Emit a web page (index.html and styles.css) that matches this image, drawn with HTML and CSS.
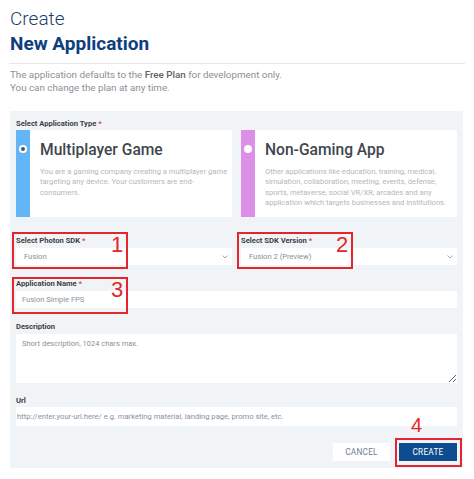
FILE: index.html
```html
<!DOCTYPE html>
<html lang="en">
<head>
<meta charset="utf-8">
<title>Create New Application</title>
<link rel="stylesheet" href="styles.css">
</head>
<body>
<div class="page">
  <header class="head">
    <div class="t1">Create</div>
    <div class="t2">New Application</div>
  </header>
  <hr class="rule">
  <p class="intro">The application defaults to the <b>Free Plan</b> for development only.<br>You can change the plan at any time.</p>

  <form class="panel">
    <div class="lbl">Select Application Type <span class="req">*</span></div>
    <div class="cards">
      <div class="card">
        <div class="strip blue"><span class="radio on"></span></div>
        <div class="card-body">
          <div class="card-title">Multiplayer Game</div>
          <div class="card-desc">You are a gaming company creating a multiplayer game targeting any device. Your customers are end-consumers.</div>
        </div>
      </div>
      <div class="card">
        <div class="strip purple"><span class="radio"></span></div>
        <div class="card-body">
          <div class="card-title">Non-Gaming App</div>
          <div class="card-desc">Other applications like education, training, medical, simulation, collaboration, meeting, events, defense, sports, metaverse, social VR/XR, arcades and any application which targets businesses and institutions.</div>
        </div>
      </div>
    </div>

    <div class="row2">
      <div class="field">
        <div class="lbl">Select Photon SDK <span class="req">*</span></div>
        <div class="sel"><span>Fusion</span><svg class="chev" width="6" height="4" viewBox="0 0 6 4"><polyline points="0.5,0.5 3,3 5.5,0.5" fill="none" stroke="#9aa0a6" stroke-width="0.9"/></svg></div>
      </div>
      <div class="field">
        <div class="lbl">Select SDK Version <span class="req">*</span></div>
        <div class="sel"><span>Fusion 2 (Preview)</span><svg class="chev" width="6" height="4" viewBox="0 0 6 4"><polyline points="0.5,0.5 3,3 5.5,0.5" fill="none" stroke="#9aa0a6" stroke-width="0.9"/></svg></div>
      </div>
    </div>

    <div class="field gap">
      <div class="lbl">Application Name <span class="req">*</span></div>
      <input class="inp" type="text" value="Fusion Simple FPS">
    </div>

    <div class="field gap">
      <div class="lbl">Description</div>
      <textarea class="area" placeholder="Short description, 1024 chars max."></textarea>
    </div>

    <div class="field gap-url">
      <div class="lbl">Url</div>
      <input class="inp url" type="text" placeholder="http://enter.your-url.here/ e.g. marketing material, landing page, promo site, etc.">
    </div>

    <div class="actions">
      <button type="button" class="btn cancel">CANCEL</button>
      <button type="button" class="btn create">CREATE</button>
    </div>
  </form>

  <div class="mark m1"></div>
  <div class="mark m2"></div>
  <div class="mark m3"></div>
  <div class="mark m4"></div>
  <div class="num n1">1</div>
  <div class="num n2">2</div>
  <div class="num n3">3</div>
  <div class="num n4">4</div>
</div>
</body>
</html>
```

FILE: styles.css
```css
* { box-sizing: border-box; }

body {
  margin: 0;
  background: #fff;
  font-family: Roboto, "Noto Sans", sans-serif;
}

.page {
  position: relative;
  width: 474px;
  height: 479px;
  padding: 6px 10px 0;
  overflow: hidden;
}

.t1 {
  font-size: 19px;
  font-weight: 300;
  line-height: 25px;
  color: #1f3f6b;
}

.t2 {
  font-size: 19px;
  font-weight: 700;
  line-height: 25px;
  color: #0e3e7e;
}

.rule {
  margin: 7px -1px 0;
  border: 0;
  border-top: 1px solid #e6e8eb;
  height: 0;
}

.intro {
  margin: 4px 0 0;
  font-size: 9.8px;
  line-height: 13px;
  color: #8c9196;
}

.intro b {
  font-weight: 500;
  color: #5f6368;
}

.panel {
  margin: 17px 1px 0 0;
  background: #f1f4f7;
  padding: 7px 6px 7px;
}

.lbl {
  font-size: 7.6px;
  font-weight: 700;
  line-height: 12px;
  color: #3b3f45;
}

.req { color: #e5484d; }

.cards {
  display: grid;
  grid-template-columns: 1fr 1fr;
  gap: 9px;
  height: 87px;
}

.card {
  display: flex;
  background: #fff;
}

.strip {
  width: 14px;
  flex: none;
  display: flex;
  justify-content: center;
  align-items: flex-start;
  padding-top: 15px;
}

.strip.blue { background: #64b5f6; }
.strip.purple { background: #dc8fe6; }

.radio {
  width: 8px;
  height: 8px;
  border-radius: 50%;
  background: #fff;
  display: flex;
  align-items: center;
  justify-content: center;
}

.radio.on::after {
  content: "";
  width: 4px;
  height: 4px;
  border-radius: 50%;
  background: #4f545b;
}

.card-body {
  padding: 10px 2px 0 10px;
}

.card-title {
  font-size: 15.6px;
  font-weight: 500;
  line-height: 20px;
  color: #41464e;
  white-space: nowrap;
}

.card-desc {
  margin-top: 7px;
  font-size: 7.6px;
  line-height: 10.4px;
  color: #b3b7bc;
}

.row2 {
  display: grid;
  grid-template-columns: 1fr 1fr;
  gap: 9px;
  margin-top: 18px;
}

.sel {
  margin-top: 1px;
  height: 17px;
  background: #fff;
  display: flex;
  align-items: center;
  justify-content: space-between;
  padding: 0 4px 0 8px;
  font-size: 7.6px;
  color: #8c9096;
}

.chev { display: block; }

.field.gap { margin-top: 13px; }
.field.gap-url { margin-top: 12px; }

.inp, .area {
  display: block;
  width: 100%;
  margin: 1px 0 0;
  border: 0;
  outline: 0;
  background: #fff;
  font-family: Roboto, "Noto Sans", sans-serif;
  font-size: 7.5px;
  color: #8c9096;
  padding: 0 6px;
}

.inp { height: 17px; }

.inp.url {
  margin-top: 0;
  height: 19px;
  padding: 0 1px;
  font-size: 7.6px;
}

.area {
  height: 49px;
  padding: 4px 6px;
  line-height: 11px;
  resize: vertical;
}

.inp::placeholder, .area::placeholder { color: #8c9096; opacity: 1; }

.actions {
  display: flex;
  justify-content: flex-end;
  gap: 9px;
  margin-top: 17px;
}

.btn {
  width: 57px;
  height: 18px;
  border: 0;
  padding: 0;
  font-family: Roboto, "Noto Sans", sans-serif;
  font-size: 8.3px;
  letter-spacing: 0.2px;
}

.btn.cancel { background: #fff; color: #6d7d92; }
.btn.create { width: 58px; background: #0f4c8f; color: #fff; }

/* annotation overlay */
.mark {
  position: absolute;
  border: 2px solid #e3262d;
}

.m1 { left: 12px; top: 232px; width: 116px; height: 37px; }
.m2 { left: 237px; top: 232px; width: 116px; height: 37px; }
.m3 { left: 12px; top: 277px; width: 116px; height: 37px; }
.m4 { left: 395px; top: 438px; width: 67px; height: 29px; }

.num {
  position: absolute;
  font-family: "Liberation Sans", Arial, sans-serif;
  font-size: 22px;
  line-height: 22px;
  color: #e3262d;
}

.n1 { left: 111px; top: 234px; }
.n2 { left: 336px; top: 234px; }
.n3 { left: 111px; top: 279px; }
.n4 { left: 411px; top: 415px; font-size: 20px; line-height: 20px; }
```
